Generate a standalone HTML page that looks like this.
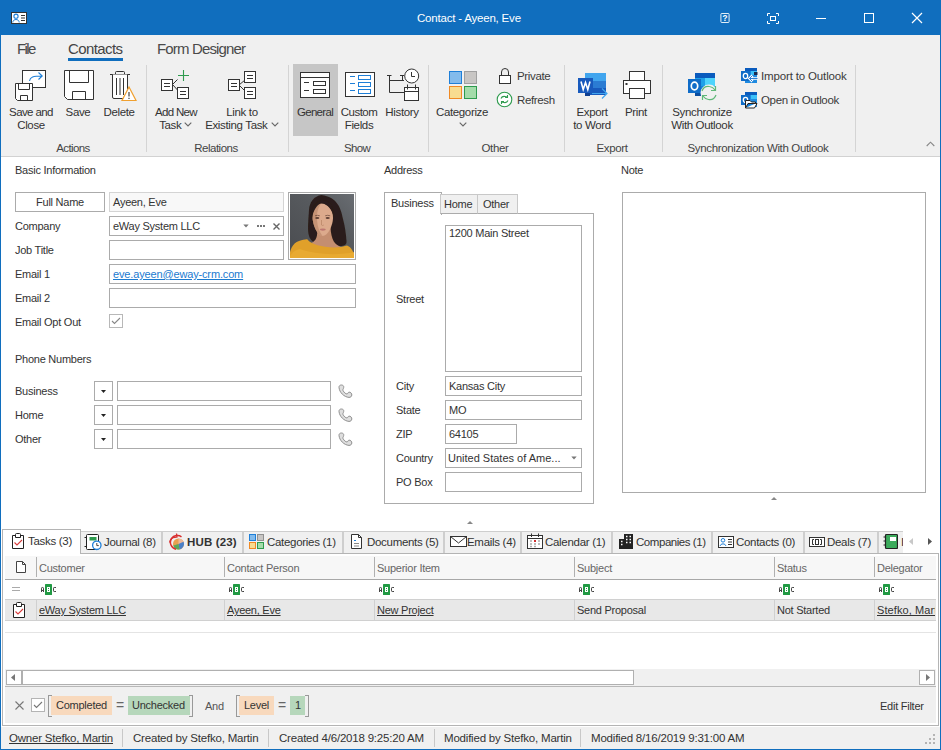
<!DOCTYPE html>
<html><head><meta charset="utf-8">
<style>
*{box-sizing:border-box;margin:0;padding:0}
html,body{width:941px;height:750px;overflow:hidden;background:#fff}
body{font-family:"Liberation Sans",sans-serif;font-size:11px;color:#3a3a3a;position:relative;letter-spacing:-0.25px}
.a{position:absolute}
.t{position:absolute;white-space:nowrap;line-height:14px;font-size:11.5px;letter-spacing:-0.35px}
#title{left:0;top:0;width:941px;height:35px;background:#106ebe}
#frameL{left:0;top:35px;width:1px;height:715px;background:#106ebe}
#frameR{left:940px;top:35px;width:1px;height:715px;background:#106ebe}
#frameB{left:0;top:749px;width:941px;height:1px;background:#106ebe}
#ribbon{left:1px;top:35px;width:939px;height:122px;background:#f0f0f0;border-bottom:1px solid #d2d2d2}
.tab{font-size:15px;line-height:18px;color:#4a4a4a;letter-spacing:-0.6px}
.rl{font-size:11.5px;letter-spacing:-0.35px;line-height:13px;text-align:center;color:#333}
.gl{font-size:11.5px;letter-spacing:-0.35px;color:#444;text-align:center}
.sep{width:1px;background:#d4d4d4;top:65px;height:87px}
.inp{position:absolute;border:1px solid #ababab;background:#fff;height:20px}
.lbl{position:absolute;white-space:nowrap;line-height:14px;color:#333}
</style></head><body>
<div class="a" id="title"></div>
<div class="a" id="frameL"></div><div class="a" id="frameR"></div><div class="a" id="frameB"></div>
<div class="a" id="ribbon"></div>

<svg class="a" style="left:11px;top:12px" width="16" height="12" viewBox="0 0 16 12"><rect x="0.5" y="0.5" width="15" height="11" fill="#fff" stroke="#333" stroke-width="1"/><circle cx="5" cy="4.2" r="2.1" fill="none" stroke="#1e7fd8" stroke-width="1.100"/><path d="M1.800 10.500 C1.800 6.500 8.200 6.500 8.200 10.500" fill="none" stroke="#1e7fd8" stroke-width="1"/><path d="M10 3.5h4M10 6h4M10 8.5h4" stroke="#333" stroke-width="1"/></svg>
<div class="t" id="ttl" style="left:417px;top:11px;color:#fff;font-size:11.5px;letter-spacing:-0.2px">Contact - Ayeen, Eve</div>
<svg class="a" style="left:720px;top:13px" width="10" height="10" viewBox="0 0 10 11"><rect x="0.5" y="0.5" width="9" height="10" rx="1" fill="none" stroke="#fff"/><text x="5" y="8.5" font-size="9" font-weight="bold" fill="#fff" text-anchor="middle" font-family="Liberation Sans">?</text></svg>
<svg class="a" style="left:767px;top:13px" width="12" height="11" viewBox="0 0 12 11"><path d="M0.5 3V0.5H3M9 0.5H11.500V3M11.500 8V10.500H9M3 10.500H0.5V8" fill="none" stroke="#fff"/><rect x="3.500" y="3.500" width="5" height="4" fill="none" stroke="#fff"/></svg>
<div class="a" style="left:816px;top:18px;width:10px;height:1px;background:#fff"></div>
<div class="a" style="left:864px;top:13px;width:10px;height:10px;border:1px solid #fff"></div>
<svg class="a" style="left:911px;top:12px" width="12" height="12" viewBox="0 0 12 12"><path d="M1 1L11 11M11 1L1 11" stroke="#fff" stroke-width="1.200" fill="none"/></svg>


<div class="t tab" style="left:17px;top:40px;letter-spacing:-1.6px">File</div>
<div class="t tab" id="tabC" style="left:68px;top:40px;color:#444">Contacts</div>
<div class="a" style="left:68px;top:58px;width:55px;height:3px;background:#106ebe"></div>
<div class="t tab" style="left:157px;top:40px;letter-spacing:-0.85px">Form Designer</div>
<div class="a sep" style="left:146px"></div><div class="a sep" style="left:288px"></div><div class="a sep" style="left:428px"></div><div class="a sep" style="left:564px"></div><div class="a sep" style="left:662px"></div><div class="a sep" style="left:855px"></div>
<div class="a" style="left:293px;top:64px;width:45px;height:72px;background:#c6c6c6"></div>

<!-- save and close -->
<svg class="a" style="left:14px;top:69px" width="34" height="33" viewBox="0 0 34 33"><rect x="8.500" y="1.500" width="23" height="17" fill="#fff" stroke="#333"/><path d="M15.500 12 C16 8 19 7 28 7 M24.500 3.500 L28.200 7 L24.500 10.500" fill="none" stroke="#1e7fd8" stroke-width="1.100"/><path d="M1.500 14.500H18.500V31.500H3.500L1.500 29.500Z" fill="#fff" stroke="#333"/><path d="M4.500 14.500V20.500H15.500V14.500M6.500 31.500V26.500H13.500V31.500" fill="none" stroke="#333"/></svg>
<!-- save -->
<svg class="a" style="left:63px;top:69px" width="32" height="32" viewBox="0 0 32 32"><path d="M1.500 1.500H30.500V30.500H4.500L1.500 27.500Z" fill="#fff" stroke="#333"/><path d="M6.500 1.500V13.500H25.500V1.500M9.500 30.500V22.500H22.500V30.500" fill="none" stroke="#333"/></svg>
<!-- delete -->
<svg class="a" style="left:109px;top:69px" width="30" height="33" viewBox="0 0 30 33"><path d="M1 5.500H21M6.500 5.500V3.500Q6.500 2.500 7.500 2.500H14.500Q15.500 2.500 15.500 3.500V5.500" fill="none" stroke="#333"/><path d="M3.500 5.500V28Q3.500 29.500 5 29.500H17Q18.500 29.500 18.500 28V5.500" fill="#fff" stroke="#333"/><path d="M7.500 9V26M11 9V26M14.500 9V26" stroke="#333" fill="none"/><path d="M20 18L27 31.500H13Z" fill="#fff" stroke="#f0a030" stroke-width="1.200"/><path d="M20 23V27.500M20 28.700V30" stroke="#333" stroke-width="1.100"/></svg>
<div class="t rl" style="left:1px;width:60px;top:106px"><span style="letter-spacing:-0.6px">Save and</span><br>Close</div>
<div class="t rl" style="left:58px;width:40px;top:106px">Save</div>
<div class="t rl" style="left:99px;width:40px;top:106px">Delete</div>
<div class="t gl" style="letter-spacing:-0.6px;left:43px;width:60px;top:141px">Actions</div>

<!-- add new task -->
<svg class="a" style="left:160px;top:69px" width="30" height="31" viewBox="0 0 30 31"><path d="M12.500 15.500L17.500 10.500M12.500 15.500L17.500 21" stroke="#333" fill="none"/><rect x="1.500" y="10.500" width="11" height="11" fill="#fff" stroke="#333"/><path d="M4 14.500H10M4 17.500H10" stroke="#333"/><rect x="17.500" y="18.500" width="11" height="11" fill="#fff" stroke="#333"/><path d="M20 22.500H26M20 25.500H26" stroke="#333"/><path d="M23.500 1V12M18 6.500H29" stroke="#2e9b4e" stroke-width="1.100"/></svg>
<svg class="a" style="left:227px;top:69px" width="30" height="31" viewBox="0 0 30 31"><path d="M12 16L18 11M12 16L18 22" stroke="#333" fill="none"/><rect x="1.500" y="10.500" width="11" height="11" fill="#fff" stroke="#333"/><path d="M4 14.500H10M4 17.500H10" stroke="#333"/><rect x="17.500" y="2.500" width="11" height="11" fill="#fff" stroke="#333"/><path d="M20 6.500H26M20 9.500H26" stroke="#333"/><rect x="17.500" y="18.500" width="11" height="11" fill="#fff" stroke="#333"/><path d="M20 22.500H26M20 25.500H26" stroke="#333"/></svg>
<div class="t rl" style="left:146px;width:60px;top:106px"><span style="letter-spacing:-0.7px">Add New</span><br>Task &nbsp;&nbsp;&nbsp;</div>
<div class="t rl" style="left:198px;width:88px;top:106px">Link to<br>Existing Task &nbsp;&nbsp;&nbsp;</div>
<svg class="a chev" style="left:184px;top:122px" width="8" height="5" viewBox="0 0 8 5"><path d="M0.7 0.7L4 4L7.300 0.7" fill="none" stroke="#666" stroke-width="1.100"/></svg>
<svg class="a chev" style="left:271px;top:122px" width="8" height="5" viewBox="0 0 8 5"><path d="M0.7 0.7L4 4L7.300 0.7" fill="none" stroke="#666" stroke-width="1.100"/></svg>
<div class="t gl" style="letter-spacing:-0.5px;left:186px;width:60px;top:141px">Relations</div>

<!-- general -->
<svg class="a" style="left:299px;top:71px" width="32" height="28" viewBox="0 0 32 28"><rect x="1.500" y="1.500" width="29" height="25" fill="#fff" stroke="#333"/><path d="M1.500 6.500H30.500M5 11.500H10M5 19.500H10" stroke="#333" fill="none"/><rect x="14.500" y="10.500" width="12" height="4" fill="none" stroke="#333"/><rect x="14.500" y="18.500" width="12" height="4" fill="none" stroke="#333"/></svg>
<svg class="a" style="left:344px;top:71px" width="32" height="28" viewBox="0 0 32 28"><rect x="1.500" y="1.500" width="29" height="24" fill="#fff" stroke="#333"/><path d="M6 5.500H11M6 12.500H11M6 19.500H11" stroke="#1e7fd8" fill="none"/><rect x="14.500" y="4.500" width="12" height="4" fill="none" stroke="#1e7fd8"/><rect x="14.500" y="11.500" width="12" height="4" fill="none" stroke="#1e7fd8"/><rect x="14.500" y="18.500" width="12" height="4" fill="none" stroke="#1e7fd8"/></svg>
<svg class="a" style="left:386px;top:68px" width="34" height="34" viewBox="0 0 34 34"><path d="M1 7.500H5.500M14 7.500H18M3.500 7.500V24.500H18M16.500 7.500V12.500M3.500 12.500H18" fill="none" stroke="#333"/><circle cx="25.700" cy="8" r="7" fill="#fff" stroke="#333"/><path d="M25.500 4V8.500H29" fill="none" stroke="#333"/><rect x="18.500" y="19.500" width="14" height="13" fill="#fff" stroke="#333"/><path d="M18.500 23.500H32.500M21.500 16.500V21.500M29.500 16.500V21.500" stroke="#333" fill="none"/></svg>
<div class="t rl" style="letter-spacing:-0.7px;left:285px;width:60px;top:106px">General</div>
<div class="t rl" style="left:329px;width:60px;top:106px"><span style="letter-spacing:-0.5px">Custom</span><br>Fields</div>
<div class="t rl" style="left:372px;width:60px;top:106px">History</div>
<div class="t gl" style="letter-spacing:-0.7px;left:327px;width:60px;top:141px">Show</div>

<!-- categorize -->
<div class="a" style="left:449px;top:71px;width:13px;height:13px;background:#83bbec;border:1px solid #1e7fd8"></div>
<div class="a" style="left:464px;top:71px;width:13px;height:13px;background:#c8c6c4;border:1px solid #a0a0a0"></div>
<div class="a" style="left:449px;top:86px;width:13px;height:13px;background:#f8dc90;border:1px solid #f08a24"></div>
<div class="a" style="left:464px;top:86px;width:13px;height:13px;background:#a4dcaa;border:1px solid #2e9b4e"></div>
<div class="t rl" style="left:432px;width:60px;top:106px">Categorize</div>
<svg class="a chev" style="left:459px;top:122px" width="8" height="5" viewBox="0 0 8 5"><path d="M0.7 0.7L4 4L7.300 0.7" fill="none" stroke="#666" stroke-width="1.100"/></svg>
<svg class="a" style="left:498px;top:67px" width="14" height="18" viewBox="0 0 14 18"><path d="M3.500 8.500V5Q3.500 1.500 7 1.500Q10.500 1.500 10.500 5V8.500" fill="none" stroke="#333"/><rect x="1.500" y="8.500" width="11" height="8" fill="#fff" stroke="#333"/></svg>
<svg class="a" style="left:496px;top:91px" width="17" height="17" viewBox="0 0 17 17"><circle cx="8.500" cy="8.500" r="7.300" fill="#fff" stroke="#2e9b4e" stroke-width="1.100"/><path d="M5 7.500Q6 5 9 5.500L11 6M11.500 4V6.500H9M12 9.500Q11 12 8 11.500L6 11M5.500 13V10.500H8" fill="none" stroke="#2e9b4e" stroke-width="1.100"/></svg>
<div class="t" style="left:517px;top:69px">Private</div>
<div class="t" style="left:517px;top:93px">Refresh</div>
<div class="t gl" style="left:465px;width:60px;top:141px">Other</div>

<!-- word -->
<svg class="a" style="left:577px;top:72px" width="32" height="28" viewBox="0 0 32 28"><rect x="8" y="1" width="21" height="8" fill="#41a5ee"/><rect x="8" y="9" width="21" height="7" fill="#2b7cd3"/><rect x="8" y="16" width="21" height="7" fill="#185abd"/><rect x="8" y="20" width="5" height="4" fill="#103f91"/><rect x="1" y="6" width="15" height="15" fill="#185abd"/><path d="M4 9.500L6.200 17.500L8.500 10.500L10.800 17.500L13 9.500" fill="none" stroke="#fff" stroke-width="1.600"/><path d="M15 21.500H30M25 16.500L30 21.500L25 26.500" fill="none" stroke="#41a5ee" stroke-width="1.200"/></svg>
<svg class="a" style="left:622px;top:70px" width="30" height="30" viewBox="0 0 30 30"><rect x="7.500" y="1.500" width="15" height="10" fill="#fff" stroke="#333"/><rect x="1.500" y="10.500" width="27" height="13" fill="#fff" stroke="#333"/><rect x="7.500" y="18.500" width="15" height="10" fill="#fff" stroke="#333"/><rect x="3.500" y="13" width="2" height="2" fill="#333"/></svg>
<div class="t rl" style="left:562px;width:60px;top:106px">Export<br>to Word</div>
<div class="t rl" style="left:606px;width:60px;top:106px">Print</div>
<div class="t gl" style="left:582px;width:60px;top:141px">Export</div>

<!-- outlook sync -->
<svg class="a" style="left:687px;top:72px" width="32" height="30" viewBox="0 0 32 30"><rect x="8" y="1" width="20" height="5" fill="#0a5bbd"/><rect x="8" y="6" width="10" height="8" fill="#1ea0e8"/><rect x="18" y="6" width="10" height="8" fill="#4fd4fc"/><rect x="8" y="14" width="10" height="9" fill="#1486d8"/><rect x="18" y="14" width="10" height="9" fill="#2cb4f4"/><rect x="8" y="20" width="6" height="4" fill="#0a4ea0"/><rect x="1" y="7" width="13" height="14" fill="#0f6cc8"/><ellipse cx="7.500" cy="14" rx="3.200" ry="3.800" fill="none" stroke="#fff" stroke-width="1.700"/><circle cx="22" cy="21" r="8.500" fill="#f0f0f0"/><path d="M15 19Q17 13.500 22.500 14.500Q26 15 28 18M28.500 14V18.500H24M29 23Q27 28.500 21.500 27.500Q18 27 16 24M15.500 28V23.500H20" fill="none" stroke="#5fb878" stroke-width="1.200"/></svg>
<div class="t rl" style="left:662px;width:80px;top:106px">Synchronize<br>With Outlook</div>
<svg class="a" style="left:741px;top:68px" width="17" height="16" viewBox="0 0 17 16"><rect x="4" y="0" width="12" height="15" fill="#1e8ae0"/><rect x="10" y="0" width="6" height="7" fill="#3cc0f8"/><rect x="4" y="0" width="12" height="3" fill="#0a5bbd"/><rect x="0" y="3" width="9" height="10" fill="#0f6cc8"/><ellipse cx="4.500" cy="8" rx="2.200" ry="2.600" fill="none" stroke="#fff" stroke-width="1.300"/><path d="M16.500 10.500H8.500M11.500 7.500L8.500 10.500L11.500 13.500" fill="none" stroke="#fff" stroke-width="2.600"/><path d="M16.500 10.500H8.500M11.500 7.500L8.500 10.500L11.500 13.500" fill="none" stroke="#2b7cd3" stroke-width="1"/><rect x="13" y="4" width="3.500" height="3" fill="#1a2a50"/></svg>
<svg class="a" style="left:741px;top:92px" width="17" height="17" viewBox="0 0 17 17"><rect x="4" y="0" width="12" height="15" fill="#1e8ae0"/><rect x="10" y="0" width="6" height="7" fill="#3cc0f8"/><rect x="4" y="0" width="12" height="3" fill="#0a5bbd"/><rect x="0" y="3" width="9" height="10" fill="#0f6cc8"/><ellipse cx="4.500" cy="8" rx="2.200" ry="2.600" fill="none" stroke="#fff" stroke-width="1.300"/><path d="M4.500 16V8.500H9L10.500 10H14.500V11.500H7L4.500 16H13.500L16 11.500H14.500" fill="#fff" stroke="#222" stroke-width="1"/></svg>
<div class="t" style="left:761px;top:69px;letter-spacing:-0.15px">Import to Outlook</div>
<div class="t" style="left:761px;top:93px">Open in Outlook</div>
<div class="t gl" style="left:680px;width:156px;top:141px">Synchronization With Outlook</div>
<svg class="a" style="left:926px;top:141px" width="9" height="6" viewBox="0 0 9 6"><path d="M0.7 5L4.500 1.200L8.300 5" fill="none" stroke="#888" stroke-width="1.100"/></svg>


<div class="lbl" style="left:15px;top:163px">Basic Information</div>
<div class="a" style="left:15px;top:192px;width:90px;height:20px;border:1px solid #ababab;background:#fff"></div>
<div class="lbl" style="left:15px;width:90px;top:195px;text-align:center">Full Name</div>
<div class="inp" style="left:109px;top:192px;width:175px;background:#f8f8f8;border-color:#d4d4d4"></div>
<div class="lbl" style="left:113px;top:195px">Ayeen, Eve</div>
<div class="lbl" style="left:15px;top:219px">Company</div>
<div class="inp" style="left:109px;top:216px;width:175px"></div>
<div class="lbl" style="left:113px;top:219px">eWay System LLC</div>
<svg class="a" style="left:243px;top:224px" width="6" height="4" viewBox="0 0 6 4"><path d="M0.300 0.5H5.700L3 3.500Z" fill="#777"/></svg>
<div class="a" style="left:257px;top:225px;width:2px;height:2px;background:#777"></div><div class="a" style="left:260px;top:225px;width:2px;height:2px;background:#777"></div><div class="a" style="left:263px;top:225px;width:2px;height:2px;background:#777"></div>
<svg class="a" style="left:273px;top:223px" width="7" height="7" viewBox="0 0 7 7"><path d="M0.500 0.500L6.500 6.500M6.500 0.500L0.500 6.500" stroke="#666" stroke-width="1.400"/></svg>
<div class="lbl" style="left:15px;top:243px">Job Title</div>
<div class="inp" style="left:109px;top:240px;width:175px"></div>
<div class="lbl" style="left:15px;top:267px">Email 1</div>
<div class="inp" style="left:109px;top:264px;width:247px"></div>
<div class="lbl" style="left:113px;top:267px;color:#1b7ad0;text-decoration:underline;letter-spacing:-0.15px">eve.ayeen@eway-crm.com</div>
<div class="lbl" style="left:15px;top:291px">Email 2</div>
<div class="inp" style="left:109px;top:288px;width:247px"></div>
<div class="lbl" style="left:15px;top:315px">Email Opt Out</div>
<div class="a" style="left:109px;top:314px;width:14px;height:14px;border:1px solid #b8b8b8;background:#fff"></div>
<svg class="a" style="left:111px;top:317px" width="10" height="8" viewBox="0 0 10 8"><path d="M1 4L3.500 6.500L9 1" fill="none" stroke="#888" stroke-width="1.100"/></svg>
<!-- photo -->
<div class="a" style="left:288px;top:192px;width:68px;height:68px;border:1px solid #ababab;background:#fff"></div>
<svg class="a" style="left:290px;top:194px" width="64" height="64" viewBox="0 0 64 64"><defs><linearGradient id="bg" x1="0" y1="1" x2="1" y2="0"><stop offset="0" stop-color="#4a4c50"/><stop offset="0.6" stop-color="#575a5e"/><stop offset="1" stop-color="#696d72"/></linearGradient><filter id="bl" x="-10%" y="-10%" width="120%" height="120%"><feGaussianBlur stdDeviation="0.75"/></filter><clipPath id="cp"><rect width="64" height="64"/></clipPath></defs><rect width="64" height="64" fill="url(#bg)"/><g clip-path="url(#cp)"><g filter="url(#bl)"><path d="M31.500 1C24 2 19.500 8 19 16C18.500 24 17.500 34 18.500 40C19.500 45 22 48 26 49L50 52C54 52 57 51 56.500 47C56 40 55 32 53 25C51 14 47 3 31.500 1Z" fill="#2b1e1a"/><path d="M27 33C28 43 26 47 21 49L34 58L51 53C45 51 41 46 40.500 33Z" fill="#c48e70"/><path d="M22.500 23C22.500 14 27 9.500 32 9.500C38 9.500 43 15 43 24C43 31 38 42 32.500 42C27.500 42 22.500 31 22.500 23Z" fill="#dcaa8c"/><path d="M22.500 23C22.500 14 27 9.500 31 9.500C28.500 13 26.500 18 27 26C27.500 33 29.500 38 32.500 42C27.500 42 22.500 31 22.500 23Z" fill="#b88466" opacity="0.6"/><path d="M31 9C27 11 23.500 16 22 24C21 17 22 10 31 6C38 5 44 10 44 23C42 16 38 10 31 9Z" fill="#2b1e1a"/><ellipse cx="27.300" cy="24" rx="2.100" ry="0.900" fill="#4a2e26" opacity="0.85"/><ellipse cx="37.700" cy="24" rx="2.100" ry="0.900" fill="#4a2e26" opacity="0.85"/><path d="M25 21.800Q27.500 20.800 29.800 21.800M35.200 21.800Q37.500 20.800 40.200 21.800" stroke="#5a3a30" stroke-width="0.800" fill="none" opacity="0.8"/><path d="M31.500 26V31Q32.500 32 33.800 31" stroke="#b88466" stroke-width="0.900" fill="none" opacity="0.8"/><ellipse cx="32.800" cy="35.600" rx="3" ry="1.100" fill="#b8706c" opacity="0.9"/><path d="M-1 66C-1 58 2 49 9 47C13 46 16 45 17.500 45.500C22 52 44 56 57 51.500C61 53 64 57 65 66Z" fill="#e0a02a"/><path d="M-1 66C0 60 4 56 10 55C25 60 45 62 65 58V66Z" fill="#e8aa30"/></g></g></svg>
<div class="lbl" style="left:15px;top:352px">Phone Numbers</div>
<div class="lbl" style="left:15px;top:384px">Business</div>
<div class="a" style="left:94px;top:381px;width:19px;height:20px;border:1px solid #ababab;background:#fff"></div>
<svg class="a" style="left:101px;top:390px" width="5" height="3" viewBox="0 0 5 3"><path d="M0 0H5L2.500 3Z" fill="#222"/></svg>
<div class="inp" style="left:117px;top:381px;width:214px"></div>
<svg class="a" style="left:338px;top:384px" width="15" height="15" viewBox="-0.5 -0.5 15 15"><path d="M0.500 3C0.300 1.500 1.500 0.400 3 0.500C4.500 0.600 5.500 1.500 5.200 3C5 4.500 4 5 4.500 6C5.500 8 7 9.300 8.500 9.500C9.300 9.500 9.500 7.700 10.500 7.600C12 7.500 13.500 9 13.300 10.500C13.200 12 12 13 10.500 12.900C5.500 12.500 1 8 0.500 3Z" fill="#dedede" stroke="#909090" stroke-width="1"/></svg>
<div class="lbl" style="left:15px;top:408px">Home</div>
<div class="a" style="left:94px;top:405px;width:19px;height:20px;border:1px solid #ababab;background:#fff"></div>
<svg class="a" style="left:101px;top:414px" width="5" height="3" viewBox="0 0 5 3"><path d="M0 0H5L2.500 3Z" fill="#222"/></svg>
<div class="inp" style="left:117px;top:405px;width:214px"></div>
<svg class="a" style="left:338px;top:408px" width="15" height="15" viewBox="-0.5 -0.5 15 15"><path d="M0.500 3C0.300 1.500 1.500 0.400 3 0.500C4.500 0.600 5.500 1.500 5.200 3C5 4.500 4 5 4.500 6C5.500 8 7 9.300 8.500 9.500C9.300 9.500 9.500 7.700 10.500 7.600C12 7.500 13.500 9 13.300 10.500C13.200 12 12 13 10.500 12.900C5.500 12.500 1 8 0.500 3Z" fill="#dedede" stroke="#909090" stroke-width="1"/></svg>
<div class="lbl" style="left:15px;top:432px">Other</div>
<div class="a" style="left:94px;top:429px;width:19px;height:20px;border:1px solid #ababab;background:#fff"></div>
<svg class="a" style="left:101px;top:438px" width="5" height="3" viewBox="0 0 5 3"><path d="M0 0H5L2.500 3Z" fill="#222"/></svg>
<div class="inp" style="left:117px;top:429px;width:214px"></div>
<svg class="a" style="left:338px;top:432px" width="15" height="15" viewBox="-0.5 -0.5 15 15"><path d="M0.500 3C0.300 1.500 1.500 0.400 3 0.500C4.500 0.600 5.500 1.500 5.200 3C5 4.500 4 5 4.500 6C5.500 8 7 9.300 8.500 9.500C9.300 9.500 9.500 7.700 10.500 7.600C12 7.500 13.500 9 13.300 10.500C13.200 12 12 13 10.500 12.900C5.500 12.500 1 8 0.500 3Z" fill="#dedede" stroke="#909090" stroke-width="1"/></svg>

<div class="lbl" style="left:384px;top:163px">Address</div>
<div class="a" style="left:384px;top:213px;width:210px;height:291px;border:1px solid #ababab;background:#fff"></div>
<div class="a" style="left:384px;top:192px;width:58px;height:23px;border:1px solid #ababab;border-bottom:none;background:#fff"></div>
<div class="a" style="left:440px;top:194px;width:38px;height:20px;border:1px solid #c8c8c8;border-bottom-color:#ababab;background:#f0f0f0"></div>
<div class="a" style="left:477px;top:194px;width:41px;height:20px;border:1px solid #c8c8c8;border-bottom-color:#ababab;background:#f0f0f0"></div>
<div class="lbl" style="left:391px;top:196px">Business</div>
<div class="lbl" style="left:444px;top:197px">Home</div>
<div class="lbl" style="left:483px;top:197px">Other</div>
<div class="lbl" style="left:396px;top:292px">Street</div>
<div class="inp" style="left:445px;top:225px;width:137px;height:147px"></div>
<div class="lbl" style="left:449px;top:226px">1200 Main Street</div>
<div class="lbl" style="left:396px;top:379px">City</div>
<div class="inp" style="left:445px;top:376px;width:137px"></div>
<div class="lbl" style="left:449px;top:379px">Kansas City</div>
<div class="lbl" style="left:396px;top:403px">State</div>
<div class="inp" style="left:445px;top:400px;width:137px"></div>
<div class="lbl" style="left:449px;top:403px">MO</div>
<div class="lbl" style="left:396px;top:427px">ZIP</div>
<div class="inp" style="left:445px;top:424px;width:72px"></div>
<div class="lbl" style="left:449px;top:427px">64105</div>
<div class="lbl" style="left:396px;top:451px">Country</div>
<div class="inp" style="left:445px;top:448px;width:137px"></div>
<div class="lbl" style="left:448px;top:451px;letter-spacing:0">United States of Ame...</div>
<svg class="a" style="left:571px;top:456px" width="6" height="4" viewBox="0 0 6 4"><path d="M0.300 0.5H5.700L3 3.500Z" fill="#777"/></svg>
<div class="lbl" style="left:396px;top:475px">PO Box</div>
<div class="inp" style="left:445px;top:472px;width:137px"></div>
<svg class="a" style="left:467px;top:521px" width="6" height="3" viewBox="0 0 6 3"><path d="M0 3L3 0L6 3Z" fill="#888"/></svg>
<div class="lbl" style="left:621px;top:163px">Note</div>
<div class="a" style="left:622px;top:192px;width:304px;height:301px;border:1px solid #ababab;background:#fff"></div>
<svg class="a" style="left:771px;top:497px" width="6" height="3" viewBox="0 0 6 3"><path d="M0 3L3 0L6 3Z" fill="#888"/></svg>


<style>
.tb{position:absolute;top:531px;height:22px;border:1px solid #cecece;border-bottom:none;background:#f0f0f0}
.tl{position:absolute;white-space:nowrap;line-height:14px;top:535px;color:#333;font-size:11.5px;letter-spacing:-0.3px}
.st{font-size:11.5px;letter-spacing:-0.2px}
.hd{position:absolute;white-space:nowrap;line-height:14px;top:561px;color:#666}
.cs{position:absolute;width:1px;background:#b0b0b0;top:557px;height:20px}
.cs2{position:absolute;width:1px;background:#d0d0d0;top:600px;height:20px}
.abc{position:absolute;top:585px;font-family:"Liberation Mono",monospace;font-size:7px;font-weight:bold;line-height:9px;letter-spacing:0;color:#222;white-space:nowrap}
.abc b{background:#2e9b4e;color:#fff;padding:1px 1px;margin:0 1px}
.cell{position:absolute;white-space:nowrap;line-height:14px;top:603px;color:#333}
.u{text-decoration:underline}
</style>
<!-- grid frame -->
<div class="a" style="left:2px;top:553px;width:937px;height:173px;border:1px solid #b4b4b4;background:#fff"></div>
<div class="a" style="left:5px;top:556px;width:931px;height:23px;background:#f7f7f7"></div>
<div class="a" style="left:5px;top:579px;width:931px;height:1px;background:#a8a8a8"></div>
<div class="a" style="left:5px;top:599px;width:931px;height:22px;background:#e8e8e8;border-top:1px solid #d0d0d0;border-bottom:1px solid #d0d0d0"></div>
<div class="a" style="left:5px;top:632px;width:931px;height:1px;background:#e4e4e4"></div>
<div class="tb" style="left:80px;width:82px"></div>
<div class="tb" style="left:162px;width:81px"></div>
<div class="tb" style="left:243px;width:100px"></div>
<div class="tb" style="left:343px;width:101px"></div>
<div class="tb" style="left:444px;width:77px"></div>
<div class="tb" style="left:521px;width:91px"></div>
<div class="tb" style="left:612px;width:100px"></div>
<div class="tb" style="left:712px;width:92px"></div>
<div class="tb" style="left:804px;width:74px"></div>
<div class="tb" style="left:878px;width:25px;border-right:none"></div>
<div class="a" style="left:2px;top:529px;width:79px;height:25px;border:1px solid #b4b4b4;border-bottom:none;background:#fff"></div>

<div class="tl" style="left:28px;top:534px">Tasks (3)</div>
<div class="tl" style="left:104px">Journal (8)</div>
<div class="tl" style="left:187px;font-weight:bold;letter-spacing:0.15px">HUB (23)</div>
<div class="tl" style="left:267px">Categories (1)</div>
<div class="tl" style="left:367px">Documents (5)</div>
<div class="tl" style="left:467px">Emails (4)</div>
<div class="tl" style="left:545px">Calendar (1)</div>
<div class="tl" style="left:636px;letter-spacing:-0.45px">Companies (1)</div>
<div class="tl" style="left:736px">Contacts (0)</div>
<div class="tl" style="left:827px">Deals (7)</div>
<div class="tl" style="left:901px;width:2px;overflow:hidden">I</div>
<svg class="a" style="left:909px;top:538px" width="4" height="7" viewBox="0 0 4 7"><path d="M4 0L0 3.500L4 7Z" fill="#c8c8c8"/></svg>
<svg class="a" style="left:928px;top:538px" width="4" height="7" viewBox="0 0 4 7"><path d="M0 0L4 3.500L0 7Z" fill="#555"/></svg>
<svg class="a" style="left:12px;top:533px" width="12" height="16" viewBox="0 0 12 16"><path d="M0.500 2.500H11.500V15.500H0.500Z" fill="#fff" stroke="#222"/><path d="M3.500 4.500V1.500Q3.500 0.500 4.500 0.500H7.500Q8.500 0.500 8.500 1.500V4.500Z" fill="#fff" stroke="#222"/><path d="M2.500 9.500L5 12L10 7" fill="none" stroke="#d83b3b" stroke-width="1.100"/></svg>
<svg class="a" style="left:13px;top:602px" width="12" height="16" viewBox="0 0 12 16"><path d="M0.500 2.500H11.500V15.500H0.500Z" fill="#fff" stroke="#222"/><path d="M3.500 4.500V1.500Q3.500 0.500 4.500 0.500H7.500Q8.500 0.500 8.500 1.500V4.500Z" fill="#fff" stroke="#222"/><path d="M2.500 9.500L5 12L10 7" fill="none" stroke="#d83b3b" stroke-width="1.100"/></svg>

<svg class="a" style="left:84px;top:533px" width="18" height="18" viewBox="0 0 18 18"><rect x="2.500" y="1.500" width="12" height="15" rx="1" fill="#fff" stroke="#222"/><path d="M0.500 4.500H3M0.500 13.500H3" stroke="#222"/><rect x="5.500" y="4" width="7" height="3.500" fill="#2e9b4e"/><circle cx="12.800" cy="12.300" r="4.200" fill="#fff" stroke="#1e7fd8" stroke-width="1.300"/><path d="M12.800 10V12.600H14.800" fill="none" stroke="#333" stroke-width="0.900"/></svg>
<svg class="a" style="left:168px;top:533px" width="17" height="17" viewBox="0 0 17 17"><circle cx="10.500" cy="11" r="5.500" fill="#e8a050"/><path d="M10.500 11L10.500 5.500A5.500 5.500 0 0 1 16 11Z" fill="#ecb898"/><path d="M10.500 11L15.500 8.800A5.500 5.500 0 0 1 11.500 16.400Z" fill="#4a80c8"/><path d="M10.500 11L11.500 16.400A5.500 5.500 0 0 1 5.300 12.500Z" fill="#5aa85a"/><path d="M8 16.300A7.200 7.200 0 0 1 3.500 5.500A7.200 7.200 0 0 1 13.500 3.800" fill="none" stroke="#d83030" stroke-width="1.500"/><path d="M1.500 9.500A7 7 0 0 1 7 4" fill="none" stroke="#d83030" stroke-width="1.200"/><path d="M8.500 0.500L9 4L5.500 4.500" fill="none" stroke="#d83030" stroke-width="1.300"/></svg>
<div class="a" style="left:249px;top:534px;width:7px;height:7px;background:#83bbec;border:1px solid #1e7fd8"></div><div class="a" style="left:257px;top:534px;width:7px;height:7px;background:#c8c6c4;border:1px solid #909090"></div><div class="a" style="left:249px;top:542px;width:7px;height:7px;background:#f8dc90;border:1px solid #f08a24"></div><div class="a" style="left:257px;top:542px;width:7px;height:7px;background:#a4dcaa;border:1px solid #2e9b4e"></div>
<svg class="a" style="left:350px;top:534px" width="13" height="16" viewBox="0 0 13 16"><path d="M1.500 0.500H8.500L11.500 3.500V14.500H1.500Z" fill="#fff" stroke="#333"/><path d="M8.500 0.500V3.500H11.500" fill="none" stroke="#333"/><path d="M4 6.500H6" stroke="#1e7fd8"/><path d="M4 9.500H9M4 12H9" stroke="#888"/></svg>
<svg class="a" style="left:450px;top:536px" width="17" height="11" viewBox="0 0 17 11"><rect x="0.500" y="0.500" width="16" height="10" fill="#fff" stroke="#333"/><path d="M0.500 0.500L8.500 7L16.500 0.500" fill="none" stroke="#333"/></svg>
<svg class="a" style="left:527px;top:533px" width="16" height="16" viewBox="0 0 16 16"><rect x="0.500" y="2.500" width="15" height="13" fill="#fff" stroke="#333"/><path d="M0.500 5.500H15.500M4.500 0.500V4M11.500 0.500V4" stroke="#333" fill="none"/><rect x="7" y="7" width="2" height="2" fill="#d03030"/><path d="M3 8H5M11 8H13M3 11H5M7 11H9M11 11H13M3 13.500H5M7 13.500H9" stroke="#aaa" stroke-width="1.500"/></svg>
<svg class="a" style="left:619px;top:534px" width="14" height="15" viewBox="0 0 14 15"><path d="M0 5H5V0H14V15H0Z" fill="#222"/><path d="M7 2.500H8.500M10.500 2.500H12M7 5.500H8.500M10.500 5.500H12M2 7.500H3.500M7 8.500H8.500M10.500 8.500H12M2 10.500H3.500" stroke="#fff" stroke-width="1.600"/></svg>
<svg class="a" style="left:718px;top:536px" width="16" height="12" viewBox="0 0 16 12"><rect x="0.5" y="0.5" width="15" height="11" fill="#fff" stroke="#333" stroke-width="1"/><circle cx="5" cy="4.300" r="1.800" fill="none" stroke="#1e7fd8" stroke-width="1"/><path d="M2.200 10 C2.200 7.200 7.800 7.200 7.800 10" fill="none" stroke="#1e7fd8" stroke-width="1"/><path d="M10 3.500h4M10 6h4M10 8.500h4" stroke="#333" stroke-width="1"/></svg>
<svg class="a" style="left:809px;top:537px" width="16" height="10" viewBox="0 0 16 10"><rect x="0.500" y="0.500" width="15" height="9" fill="#fff" stroke="#333"/><path d="M5 2.500H3.500V7.500H5M11 2.500H12.500V7.500H11" fill="none" stroke="#333"/><rect x="6.500" y="2.500" width="3" height="5" fill="none" stroke="#333"/></svg>
<svg class="a" style="left:883px;top:533px" width="15" height="17" viewBox="0 0 15 17"><rect x="2.500" y="1.500" width="12" height="14" rx="1" fill="#3cab5c" stroke="#222" stroke-width="1.200"/><rect x="7" y="4" width="6" height="4" fill="#fff"/><path d="M0.500 4H2.500M0.500 8H2.500M0.500 12H2.500" stroke="#222"/></svg>

<svg class="a" style="left:16px;top:561px" width="10" height="12" viewBox="0 0 10 12"><path d="M0.500 0.500H6.500L9.500 3.500V11.500H0.500Z" fill="#fff" stroke="#444"/><path d="M6.500 0.500V3.500H9.500" fill="none" stroke="#444"/></svg>
<div class="a" style="left:12px;top:587px;width:8px;height:1px;background:#aaa"></div><div class="a" style="left:12px;top:590px;width:8px;height:1px;background:#aaa"></div>
<div class="cs" style="left:36px"></div><div class="cs2" style="left:36px"></div><div class="hd" style="left:39px">Customer</div><svg class="a" style="left:41px;top:584px" width="15" height="11" viewBox="0 0 15 11"><rect x="4" y="0" width="7" height="11" rx="0.600" fill="#219a44"/><rect x="6" y="3" width="3" height="5" fill="#fff"/><rect x="7" y="4" width="1" height="1" fill="#219a44"/><rect x="7" y="6" width="1" height="1" fill="#219a44"/><path d="M0.500 8V4.200Q0.500 3.500 1.200 3.500H1.800Q2.500 3.500 2.500 4.200V8M0.500 6.500H2.500" fill="none" stroke="#444"/><path d="M15 3.500H13.200Q12.500 3.500 12.500 4.200V6.800Q12.500 7.500 13.200 7.500H15" fill="none" stroke="#444"/></svg><div class="cell u" style="left:39px">eWay System LLC</div>
<div class="cs" style="left:224px"></div><div class="cs2" style="left:224px"></div><div class="hd" style="left:227px">Contact Person</div><svg class="a" style="left:229px;top:584px" width="15" height="11" viewBox="0 0 15 11"><rect x="4" y="0" width="7" height="11" rx="0.600" fill="#219a44"/><rect x="6" y="3" width="3" height="5" fill="#fff"/><rect x="7" y="4" width="1" height="1" fill="#219a44"/><rect x="7" y="6" width="1" height="1" fill="#219a44"/><path d="M0.500 8V4.200Q0.500 3.500 1.200 3.500H1.800Q2.500 3.500 2.500 4.200V8M0.500 6.500H2.500" fill="none" stroke="#444"/><path d="M15 3.500H13.200Q12.500 3.500 12.500 4.200V6.800Q12.500 7.500 13.200 7.500H15" fill="none" stroke="#444"/></svg><div class="cell u" style="left:227px">Ayeen, Eve</div>
<div class="cs" style="left:374px"></div><div class="cs2" style="left:374px"></div><div class="hd" style="left:377px">Superior Item</div><svg class="a" style="left:379px;top:584px" width="15" height="11" viewBox="0 0 15 11"><rect x="4" y="0" width="7" height="11" rx="0.600" fill="#219a44"/><rect x="6" y="3" width="3" height="5" fill="#fff"/><rect x="7" y="4" width="1" height="1" fill="#219a44"/><rect x="7" y="6" width="1" height="1" fill="#219a44"/><path d="M0.500 8V4.200Q0.500 3.500 1.200 3.500H1.800Q2.500 3.500 2.500 4.200V8M0.500 6.500H2.500" fill="none" stroke="#444"/><path d="M15 3.500H13.200Q12.500 3.500 12.500 4.200V6.800Q12.500 7.500 13.200 7.500H15" fill="none" stroke="#444"/></svg><div class="cell u" style="left:377px">New Project</div>
<div class="cs" style="left:574px"></div><div class="cs2" style="left:574px"></div><div class="hd" style="left:577px">Subject</div><svg class="a" style="left:579px;top:584px" width="15" height="11" viewBox="0 0 15 11"><rect x="4" y="0" width="7" height="11" rx="0.600" fill="#219a44"/><rect x="6" y="3" width="3" height="5" fill="#fff"/><rect x="7" y="4" width="1" height="1" fill="#219a44"/><rect x="7" y="6" width="1" height="1" fill="#219a44"/><path d="M0.500 8V4.200Q0.500 3.500 1.200 3.500H1.800Q2.500 3.500 2.500 4.200V8M0.500 6.500H2.500" fill="none" stroke="#444"/><path d="M15 3.500H13.200Q12.500 3.500 12.500 4.200V6.800Q12.500 7.500 13.200 7.500H15" fill="none" stroke="#444"/></svg><div class="cell" style="left:577px">Send Proposal</div>
<div class="cs" style="left:774px"></div><div class="cs2" style="left:774px"></div><div class="hd" style="left:777px">Status</div><svg class="a" style="left:779px;top:584px" width="15" height="11" viewBox="0 0 15 11"><rect x="4" y="0" width="7" height="11" rx="0.600" fill="#219a44"/><rect x="6" y="3" width="3" height="5" fill="#fff"/><rect x="7" y="4" width="1" height="1" fill="#219a44"/><rect x="7" y="6" width="1" height="1" fill="#219a44"/><path d="M0.500 8V4.200Q0.500 3.500 1.200 3.500H1.800Q2.500 3.500 2.500 4.200V8M0.500 6.500H2.500" fill="none" stroke="#444"/><path d="M15 3.500H13.200Q12.500 3.500 12.500 4.200V6.800Q12.500 7.500 13.200 7.500H15" fill="none" stroke="#444"/></svg><div class="cell" style="left:777px">Not Started</div>
<div class="cs" style="left:874px"></div><div class="cs2" style="left:874px"></div><div class="hd" style="left:877px">Delegator</div><svg class="a" style="left:879px;top:584px" width="15" height="11" viewBox="0 0 15 11"><rect x="4" y="0" width="7" height="11" rx="0.600" fill="#219a44"/><rect x="6" y="3" width="3" height="5" fill="#fff"/><rect x="7" y="4" width="1" height="1" fill="#219a44"/><rect x="7" y="6" width="1" height="1" fill="#219a44"/><path d="M0.500 8V4.200Q0.500 3.500 1.200 3.500H1.800Q2.500 3.500 2.500 4.200V8M0.500 6.500H2.500" fill="none" stroke="#444"/><path d="M15 3.500H13.200Q12.500 3.500 12.500 4.200V6.800Q12.500 7.500 13.200 7.500H15" fill="none" stroke="#444"/></svg><div class="cell u" style="left:877px;width:58px;overflow:hidden;letter-spacing:0.1px">Stefko, Martin</div>

<div class="a" style="left:5px;top:669px;width:931px;height:17px;background:#f0f0f0"></div>
<div class="a" style="left:6px;top:670px;width:16px;height:15px;border:1px solid #b0b0b0;background:#fff"></div>
<svg class="a" style="left:11px;top:674px" width="4" height="7" viewBox="0 0 4 7"><path d="M4 0L0 3.500L4 7Z" fill="#777"/></svg>
<div class="a" style="left:22px;top:670px;width:612px;height:15px;border:1px solid #b0b0b0;background:#fff"></div>
<div class="a" style="left:919px;top:670px;width:16px;height:15px;border:1px solid #b0b0b0;background:#fff"></div>
<svg class="a" style="left:926px;top:674px" width="4" height="7" viewBox="0 0 4 7"><path d="M0 0L4 3.500L0 7Z" fill="#777"/></svg>
<div class="a" style="left:5px;top:686px;width:931px;height:37px;background:#f0f0f0;border-top:1px solid #b8b8b8"></div>
<!-- filter -->
<svg class="a" style="left:15px;top:701px" width="9" height="9" viewBox="0 0 9 9"><path d="M0.500 0.500L8.500 8.500M8.500 0.500L0.500 8.500" stroke="#777" stroke-width="1.100"/></svg>
<div class="a" style="left:31px;top:698px;width:14px;height:14px;border:1px solid #b4b4b4;background:#fff"></div>
<svg class="a" style="left:33px;top:701px" width="10" height="8" viewBox="0 0 10 8"><path d="M1 4L3.500 6.500L9 1" fill="none" stroke="#777" stroke-width="1.100"/></svg>
<div class="a" style="left:48px;top:695px;width:4px;height:22px;border:1px solid #999;border-right:none"></div>
<div class="a" style="left:51px;top:696px;width:61px;height:19px;background:#f8d9bd"></div>
<div class="lbl" style="left:56px;top:698px">Completed</div>
<div class="lbl" style="left:116px;top:698px;color:#666;font-size:14px">=</div>
<div class="a" style="left:128px;top:696px;width:62px;height:19px;background:#b6d7bb"></div>
<div class="lbl" style="left:132px;top:698px">Unchecked</div>
<div class="a" style="left:189px;top:695px;width:4px;height:22px;border:1px solid #999;border-left:none"></div>
<div class="lbl" style="left:205px;top:699px;color:#555">And</div>
<div class="a" style="left:236px;top:695px;width:4px;height:22px;border:1px solid #999;border-right:none"></div>
<div class="a" style="left:239px;top:696px;width:35px;height:19px;background:#f8d9bd"></div>
<div class="lbl" style="left:244px;top:698px">Level</div>
<div class="lbl" style="left:278px;top:698px;color:#666;font-size:14px">=</div>
<div class="a" style="left:290px;top:696px;width:15px;height:19px;background:#b6d7bb"></div>
<div class="lbl" style="left:295px;top:698px">1</div>
<div class="a" style="left:305px;top:695px;width:4px;height:22px;border:1px solid #999;border-left:none"></div>
<div class="lbl" style="left:880px;top:699px">Edit Filter</div>


<div class="a" style="left:1px;top:727px;width:939px;height:22px;background:#f0f0f0"></div>
<div class="lbl u st" style="left:9px;top:731px">Owner Stefko, Martin</div>
<div class="lbl st" style="left:133px;top:731px">Created by Stefko, Martin</div>
<div class="lbl st" style="left:279px;top:731px">Created 4/6/2018 9:25:20 AM</div>
<div class="lbl st" style="left:444px;top:731px">Modified by Stefko, Martin</div>
<div class="lbl st" style="left:591px;top:731px">Modified 8/16/2019 9:31:00 AM</div>
<div class="a" style="left:122px;top:729px;width:1px;height:18px;background:#c8c8c8"></div>
<div class="a" style="left:268px;top:729px;width:1px;height:18px;background:#c8c8c8"></div>
<div class="a" style="left:434px;top:729px;width:1px;height:18px;background:#c8c8c8"></div>
<div class="a" style="left:580px;top:729px;width:1px;height:18px;background:#c8c8c8"></div>
<svg class="a" style="left:925px;top:734px" width="10" height="10" viewBox="0 0 10 10"><path d="M8 0h2v2h-2zM4 4h2v2h-2zM8 4h2v2h-2zM0 8h2v2h-2zM4 8h2v2h-2zM8 8h2v2h-2z" fill="#b4b4b4"/></svg>

</body></html>
